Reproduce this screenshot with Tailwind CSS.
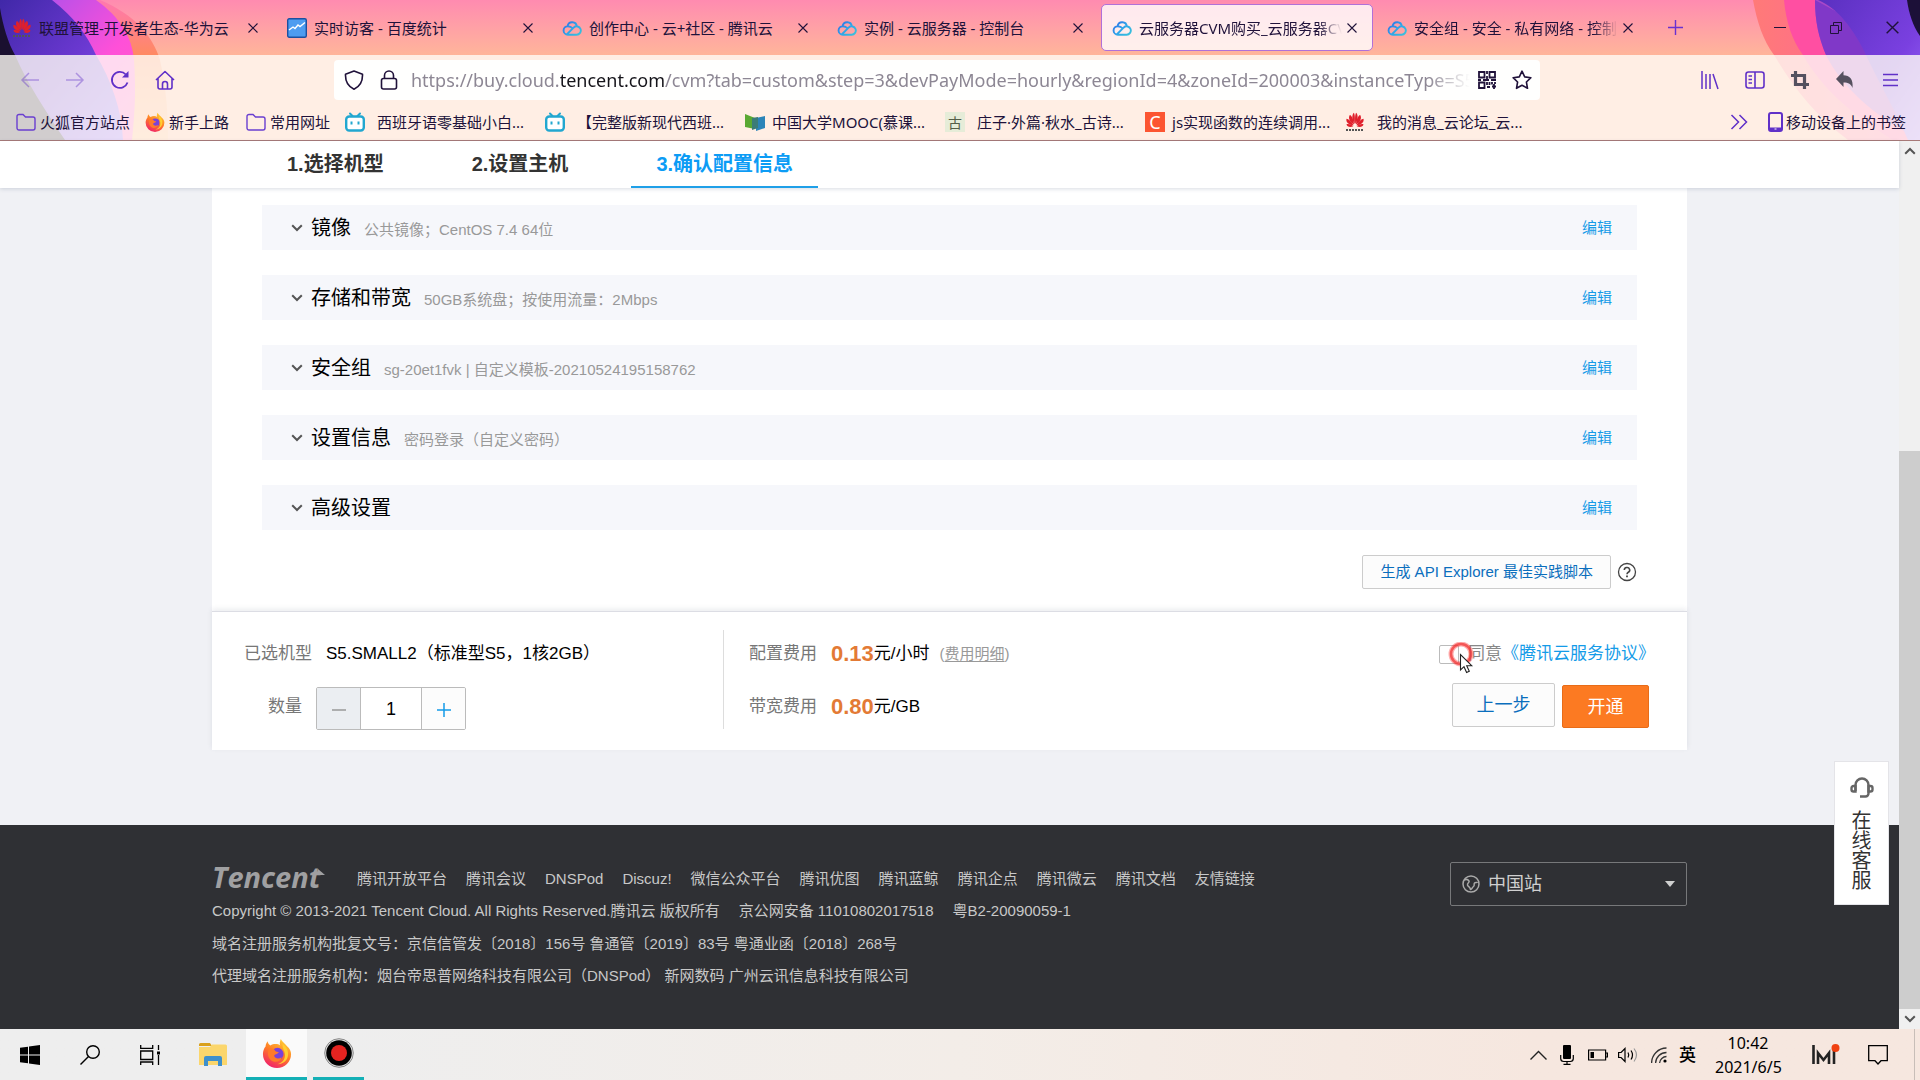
<!DOCTYPE html>
<html lang="zh-CN">
<head>
    <meta charset="UTF-8">
    <meta name="viewport" content="width=device-width, initial-scale=1.0">
    <title>云服务器CVM购买_云服务器CVM</title>
    <script src="https://cdn.jsdelivr.net/npm/@tailwindcss/browser@4"></script>
</head>
<body class="h-screen overflow-hidden flex flex-col bg-[#f0f1f5] text-[15px] leading-5 text-black font-['Liberation_Sans','Noto_Sans_CJK_SC',sans-serif]">

    <!-- shared icons -->
    <svg class="absolute size-0" aria-hidden="true">
        <defs>
            <linearGradient id="cloudFill" gradientUnits="userSpaceOnUse" x1="4" y1="4" x2="20" y2="21"><stop stop-color="#2f6fe8"/><stop offset=".55" stop-color="#2fa8e8"/><stop offset="1" stop-color="#38c0dc"/></linearGradient>
            <linearGradient id="foxFill" x1=".8" y1="0" x2=".3" y2="1"><stop stop-color="#ffd83a"/><stop offset=".5" stop-color="#ff7b25"/><stop offset="1" stop-color="#f0206c"/></linearGradient>
        </defs>
        <symbol id="close" viewBox="0 0 10 10"><path d="M.5.5l9 9M9.5.5l-9 9" fill="none" stroke="currentColor" stroke-width="1.1"/></symbol>
        <symbol id="chevron" viewBox="0 0 12 8"><path d="M1.2 1.2L6 6l4.800-4.800" fill="none" stroke="currentColor" stroke-width="2"/></symbol>
        <symbol id="cloud" viewBox="0 0 24 24"><path d="M13 12.500C11.300 10.800 9.300 9.800 7 9.800a5.100 5.100 0 0 0 0 10.200h10.500a5 5 0 1 0-3.300-8.700L6 19.500M6.700 9.800a5.600 5.600 0 0 1 11.100.4" fill="none" stroke="url(#cloudFill)" stroke-width="2.300" stroke-linejoin="round"/></symbol>
        <symbol id="folder" viewBox="0 0 20 18"><path d="M1 3.500A2 2 0 0 1 3 1.500h4L9.500 4H17a2 2 0 0 1 2 2v9a2 2 0 0 1-2 2H3a2 2 0 0 1-2-2z" fill="none" stroke="#6a3fd0" stroke-width="1.400"/></symbol>
        <symbol id="bili" viewBox="0 0 20 20"><path d="M5 1.500L7.500 4M15 1.500L12.500 4" stroke="#22a7d0" stroke-width="2" stroke-linecap="round"/><rect x="1.200" y="4.500" width="17.600" height="14" rx="3" fill="#fff" stroke="#22a7d0" stroke-width="2.400"/><path d="M6.500 9.500v3M13.500 9.500v3" stroke="#22a7d0" stroke-width="2"/></symbol>
        <symbol id="huawei" viewBox="0 0 20 20"><g fill="#e0202c"><path d="M9.700 12C7 8 6.500 3.500 8.800.8c1 1.200 1.400 5 .9 11.200zM10.300 12C13 8 13.500 3.500 11.200.8c-1 1.200-1.400 5-.9 11.200z"/><path d="M9 12.600C4.800 10 2.800 6 4.800 3c2 .6 3.800 4.500 4.200 9.600zM11 12.600C15.200 10 17.200 6 15.200 3c-2 .6-3.800 4.500-4.200 9.600z"/><path d="M8.500 13.400C4 13 .5 10.300 1.500 6.800c2 0 5.200 3 7 6.600zM11.500 13.400C16 13 19.500 10.300 18.500 6.800c-2 0-5.200 3-7 6.600z"/><path d="M8.300 14.300c-3 1.400-6.300.7-6.800-2 2-.7 4.700.2 6.800 2zM11.700 14.300c3 1.400 6.300.7 6.800-2-2-.7-4.700.2-6.800 2z"/></g><path d="M1 18h18" stroke="#555" stroke-width="2" stroke-dasharray="2 1"/></symbol>
        <symbol id="firefox" viewBox="0 0 32 32"><path d="M27 9c-2-3-5-4-7-8-1 3-1.500 5-.5 7C17 6 12 6 9 8 7 7 6 5 6.200 3.500 4.500 5 4 7 3.800 9 2 11 1 14 1 17a15 15 0 0 0 30 0c0-3-1.500-6-4-8z" fill="url(#foxFill)"/><path d="M22 6c4 3 7 8 5.500 14-1.500 5-6 8-11 8 6-2 8.500-6 8-11-.4-4-3-6-2.500-11z" fill="#ffcf30"/><circle cx="16.500" cy="17" r="6.500" fill="#7a42d8"/><path d="M7 12c3-1.500 6-.5 7 1.500 1 1.300 3 .8 4 2-2 2-4.500 1.500-5 3.800 1 3 5 3.500 8 1.200-1 4.500-7 6.500-11 3.500-3.500-2.500-4.500-8-3-12z" fill="#ff7a2a"/></symbol>
    </svg>

    <!-- browser chrome -->
    <header class="relative flex-none h-[141px] text-[#20123a] font-['Noto_Sans','Noto_Sans_CJK_SC',sans-serif] bg-linear-to-b from-[#ff8bb0] to-[#ffb59a] to-[55px] border-b border-[#a87a78]">
        <svg class="absolute left-0 top-0 w-[240px] h-[140px]" viewBox="0 0 240 140" aria-hidden="true">
            <defs>
                <linearGradient id="lv" x1="0" y1="0" x2="1" y2="1"><stop stop-color="#4028a8"/><stop offset=".5" stop-color="#6a38d0"/><stop offset="1" stop-color="#8a5cff"/></linearGradient>
                <linearGradient id="lm" x1="0" y1="0" x2="1" y2="1"><stop stop-color="#9a50f0"/><stop offset=".6" stop-color="#ff50d8"/><stop offset="1" stop-color="#ff60c0"/></linearGradient>
                <linearGradient id="lo" x1="0" y1="0" x2="0" y2="1"><stop stop-color="#ff78b0"/><stop offset=".4" stop-color="#ff8a60"/><stop offset="1" stop-color="#ffb080"/></linearGradient>
            </defs>
            <path d="M0 0h100c35 15 52 35 60 60 6 28 8 50 8 80H0z" fill="url(#lo)"/>
            <path d="M0 0h96c24 17 36 37 38 60 2 30 1 50-2 80H0z" fill="url(#lm)"/>
            <path d="M0 0h52c22 17 35 35 44 55 15 25 26 55 27 85H0z" fill="url(#lv)"/>
            <path d="M0 8c3 18 8 35 15 47 12 28 30 55 50 85H0z" fill="#1a1030"/>
        </svg>
        <svg class="absolute right-0 top-0 w-[220px] h-[140px]" viewBox="0 0 220 140" aria-hidden="true">
            <defs>
                <linearGradient id="rc" x1="0" y1="0" x2="1" y2="0"><stop stop-color="#ff7a78"/><stop offset="1" stop-color="#ff60a0"/></linearGradient>
                <linearGradient id="rv" x1="0" y1="0" x2="1" y2="1"><stop stop-color="#5a30c0"/><stop offset=".6" stop-color="#7a40e0"/><stop offset="1" stop-color="#a070ff"/></linearGradient>
            </defs>
            <path d="M53 0c4 22 10 40 21 55 18 30 40 60 74 85h72V0z" fill="url(#rc)"/>
            <path d="M84 0c2 22 8 40 19 55 20 35 50 60 90 85h27V0z" fill="#ff4fa2"/>
            <path d="M115 0c0 22 4 38 11 55 16 32 48 62 94 84V0z" fill="#a848c8"/>
            <path d="M115 0c0 22 4 38 11 55h44c-10-10-17-24-20-36z" fill="#8038c8"/>
            <path d="M118 0c20 8 36 30 48 55 14 30 32 60 42 85h12V0z" fill="url(#rv)"/>
            <path d="M207 0c2 14 6 26 13 36V0z" fill="#1c1038"/>
        </svg>

        <div class="relative flex h-[55px] items-center pl-px">
            <div class="flex min-w-0 max-w-[275px] flex-1 items-center pl-[11px] pr-[13px]">
                <svg class="size-5 flex-none"><use href="#huawei"/></svg>
                <a href="#" class="ml-[7px] flex-1 overflow-hidden whitespace-nowrap">联盟管理-开发者生态-华为云</a>
                <button class="flex size-5 flex-none items-center justify-center" aria-label="关闭标签页"><svg class="size-[10px]"><use href="#close"/></svg></button>
            </div>
            <div class="flex min-w-0 max-w-[275px] flex-1 items-center pl-[11px] pr-[13px]">
                <svg class="size-5 flex-none" viewBox="0 0 20 20"><rect x=".7" y=".7" width="18.600" height="18.600" rx="1.500" fill="#4e9cf0" stroke="#1c50a0" stroke-width="1.400"/><path d="M2 12l4-3 2 1.500 3-3.500 2 1.500 5-4" fill="none" stroke="#fff" stroke-width="1.400"/></svg>
                <a href="#" class="ml-[7px] flex-1 overflow-hidden whitespace-nowrap">实时访客 - 百度统计</a>
                <button class="flex size-5 flex-none items-center justify-center" aria-label="关闭标签页"><svg class="size-[10px]"><use href="#close"/></svg></button>
            </div>
            <div class="flex min-w-0 max-w-[275px] flex-1 items-center pl-[11px] pr-[13px]">
                <svg class="size-5 flex-none"><use href="#cloud"/></svg>
                <a href="#" class="ml-[7px] flex-1 overflow-hidden whitespace-nowrap">创作中心 - 云+社区 - 腾讯云</a>
                <button class="flex size-5 flex-none items-center justify-center" aria-label="关闭标签页"><svg class="size-[10px]"><use href="#close"/></svg></button>
            </div>
            <div class="flex min-w-0 max-w-[275px] flex-1 items-center pl-[11px] pr-[13px]">
                <svg class="size-5 flex-none"><use href="#cloud"/></svg>
                <a href="#" class="ml-[7px] flex-1 overflow-hidden whitespace-nowrap">实例 - 云服务器 - 控制台</a>
                <button class="flex size-5 flex-none items-center justify-center" aria-label="关闭标签页"><svg class="size-[10px]"><use href="#close"/></svg></button>
            </div>
            <div class="mr-[3px] flex h-[47px] min-w-0 max-w-[272px] flex-1 items-center rounded-[5px] border border-[#b070d8] bg-white/80 px-[10px]">
                <svg class="size-5 flex-none"><use href="#cloud"/></svg>
                <a href="#" class="ml-[7px] flex-1 overflow-hidden whitespace-nowrap [mask-image:linear-gradient(to_right,#000_88%,transparent)]">云服务器CVM购买_云服务器CVM</a>
                <button class="flex size-5 flex-none items-center justify-center" aria-label="关闭标签页"><svg class="size-[10px]"><use href="#close"/></svg></button>
            </div>
            <div class="flex min-w-0 max-w-[275px] flex-1 items-center pl-[11px] pr-[13px]">
                <svg class="size-5 flex-none"><use href="#cloud"/></svg>
                <a href="#" class="ml-[7px] flex-1 overflow-hidden whitespace-nowrap [mask-image:linear-gradient(to_right,#000_88%,transparent)]">安全组 - 安全 - 私有网络 - 控制台</a>
                <button class="flex size-5 flex-none items-center justify-center" aria-label="关闭标签页"><svg class="size-[10px]"><use href="#close"/></svg></button>
            </div>
            <button class="flex h-full w-12 flex-none items-center justify-center" aria-label="新建标签页"><svg class="size-[15px]" viewBox="0 0 15 15"><path d="M7.500 0v15M0 7.500h15" stroke="#6a30d0" stroke-width="1.400"/></svg></button>
            <div class="ml-auto flex h-full">
                <button class="flex w-14 items-center justify-center" aria-label="最小化"><svg class="size-3" viewBox="0 0 12 12"><path d="M0 5.500h12" stroke="currentColor"/></svg></button>
                <button class="flex w-14 items-center justify-center" aria-label="还原"><svg class="size-3" viewBox="0 0 12 12" fill="none" stroke="currentColor"><path d="M.5 3.500h8v8h-8zM3.500 3.500v-3h8v8h-3"/></svg></button>
                <button class="flex w-14 items-center justify-center" aria-label="关闭"><svg class="size-[13px]"><use href="#close"/></svg></button>
            </div>
        </div>

        <div class="relative h-[85px] bg-[#fffcf6]/80">
            <div class="flex h-[50px] items-center">
                <div class="flex w-[334px] flex-none items-center gap-[25px] pl-5 text-[#6030c8]">
                    <button class="opacity-40" aria-label="后退"><svg class="size-5" viewBox="0 0 20 20" fill="none" stroke="currentColor" stroke-width="1.500"><path d="M19 10H2M9 3l-7 7 7 7"/></svg></button>
                    <button class="opacity-40" aria-label="前进"><svg class="size-5" viewBox="0 0 20 20" fill="none" stroke="currentColor" stroke-width="1.500"><path d="M1 10h17M11 3l7 7-7 7"/></svg></button>
                    <button aria-label="刷新"><svg class="size-5" viewBox="0 0 20 20" fill="none" stroke="currentColor" stroke-width="1.800"><path d="M17.500 12.500A8 8 0 1 1 15.800 4.500"/><path d="M18.500 1v6.500H12z" fill="currentColor" stroke="none"/></svg></button>
                    <button aria-label="主页"><svg class="size-5" viewBox="0 0 20 20" fill="none" stroke="currentColor" stroke-width="1.600" stroke-linejoin="round"><path d="M1 10L10 1.500 19 10M3 8.500V17a2 2 0 0 0 2 2h10a2 2 0 0 0 2-2V8.500M7.500 19v-5a2.500 2.500 0 0 1 5 0v5"/></svg></button>
                </div>
                <div class="flex h-10 min-w-0 flex-1 items-center rounded bg-white/95 pl-[10px] pr-2">
                    <svg class="size-5 flex-none" viewBox="0 0 20 20" fill="none" stroke="#20123a" stroke-width="1.600"><path d="M10 1l8.500 3.200C18.800 11 16 16.500 10 19.200 4 16.500 1.200 11 1.500 4.200z" stroke-linejoin="round"/></svg>
                    <svg class="ml-[15px] size-5 flex-none" viewBox="0 0 20 20" fill="none" stroke="#20123a" stroke-width="1.600"><rect x="2.500" y="8.500" width="15" height="10.500" rx="2"/><path d="M5.500 8.500V5.500a4.500 4.500 0 0 1 9 0v3"/></svg>
                    <div class="ml-3 flex-1 overflow-hidden whitespace-nowrap text-lg leading-6 text-[#8d8794] [mask-image:linear-gradient(to_right,#000_96%,transparent)]">https://buy.cloud.<span class="text-[#15141a]">tencent.com</span>/cvm?tab=custom&amp;step=3&amp;devPayMode=hourly&amp;regionId=4&amp;zoneId=200003&amp;instanceType=S5</div>
                    <button class="ml-2 flex-none" aria-label="二维码"><svg class="size-[18px]" viewBox="0 0 18 18" fill="none" stroke="#20123a" stroke-width="1.800"><path d="M1 1h5.500v5.500H1zM11.500 1H17v5.500h-5.500zM1 11.500h5.500V17H1z"/><path d="M9 0v3M9 5v4M0 9h3M5 9h6M13 9h5M9 11v3M11.500 11v3M9 16h3M14 11v2.500M17 11v2M14 15.500h4M16 13v5"/></svg></button>
                    <button class="ml-4 flex-none" aria-label="收藏"><svg class="size-5" viewBox="0 0 20 20" fill="none" stroke="#20123a" stroke-width="1.600" stroke-linejoin="round"><path d="M10 1.200l2.700 5.700 6.200.8-4.500 4.300 1.100 6.300L10 15.200l-5.500 3.100L5.600 12 1.100 7.700l6.200-.8z"/></svg></button>
                </div>
                <div class="flex w-[380px] flex-none items-center justify-end gap-[25px] pr-5 text-[#6030c8]">
                    <button aria-label="书库"><svg class="size-5" viewBox="0 0 20 20" fill="none" stroke="currentColor" stroke-width="1.500"><path d="M2 1v18M6 4v15M10 4v15M13 4l5 15"/></svg></button>
                    <button aria-label="侧栏"><svg class="size-5" viewBox="0 0 20 20" fill="none" stroke="currentColor" stroke-width="1.600"><rect x="1" y="2" width="18" height="16" rx="2.500"/><path d="M10 2v16M3.500 6H7M3.500 9.500H7M3.500 13H7"/></svg></button>
                    <button aria-label="截图"><svg class="size-5" viewBox="0 0 20 20" fill="none" stroke="#55505f" stroke-width="3.200"><path d="M5.500 1v13.500H19M1 5.500h13.500V19"/></svg></button>
                    <button aria-label="撤销"><svg class="size-5" viewBox="0 0 20 20"><path d="M8.500 1v4.200c6 .3 10 3.500 9 12.800-1.500-4-4-5.500-9-5.500V17L1 9z" fill="#55505f"/></svg></button>
                    <button aria-label="菜单"><svg class="size-5" viewBox="0 0 20 20"><path d="M3 4.500h15M3 10h15M3 15.500h15" stroke="currentColor" stroke-width="1.500"/></svg></button>
                </div>
            </div>
            <nav class="flex h-[35px] items-center whitespace-nowrap pl-4 pr-[14px] pb-px">
                <a href="#" class="flex items-center gap-1 mr-[15px]"><svg class="h-[18px] w-5"><use href="#folder"/></svg>火狐官方站点</a>
                <a href="#" class="flex items-center gap-1 mr-[17px]"><svg class="size-5"><use href="#firefox"/></svg>新手上路</a>
                <a href="#" class="flex items-center gap-1 mr-[15px]"><svg class="h-[18px] w-5"><use href="#folder"/></svg>常用网址</a>
                <a href="#" class="flex w-[200px] items-center gap-3"><svg class="size-5 flex-none"><use href="#bili"/></svg>西班牙语零基础小白...</a>
                <a href="#" class="flex w-[200px] items-center gap-3"><svg class="size-5 flex-none"><use href="#bili"/></svg>【完整版新现代西班...</a>
                <a href="#" class="flex w-[200px] items-center gap-[7px]"><svg class="size-5 flex-none" viewBox="0 0 20 20"><path d="M0 2l10 4v11L0 15z" fill="#5aa832"/><path d="M20 4l-9 2v13l9-3z" fill="#2b84b8"/><path d="M7 6l6-1v11l-6 2z" fill="#3b7c78"/></svg>中国大学MOOC(慕课...</a>
                <a href="#" class="flex w-[200px] items-center gap-3"><span class="flex size-5 flex-none items-center justify-center bg-[#e6ecd8] font-['Noto_Sans_CJK_SC',sans-serif] text-sm text-[#555f48]">古</span>庄子·外篇·秋水_古诗...</a>
                <a href="#" class="flex w-[200px] items-center gap-[7px]"><span class="flex size-5 flex-none items-center justify-center bg-[#fc5531] text-lg text-white">C</span>js实现函数的连续调用...</a>
                <a href="#" class="flex items-center gap-3"><svg class="size-5 flex-none"><use href="#huawei"/></svg>我的消息_云论坛_云...</a>
                <button class="ml-auto mr-5" aria-label="更多书签"><svg class="h-4 w-[18px]" viewBox="0 0 18 16" fill="none" stroke="#6030c8" stroke-width="1.500"><path d="M1.500 1l7 7-7 7M9.500 1l7 7-7 7"/></svg></button>
                <a href="#" class="flex items-center gap-[3px]"><svg class="h-5 w-[15px]" viewBox="0 0 15 20"><rect x="1" y="1" width="13" height="18" rx="2" fill="none" stroke="#6030c8" stroke-width="2"/><path d="M2 15.500h11V19H2z" fill="#6030c8"/><path d="M6.500 17h2" stroke="#fff"/></svg>移动设备上的书签</a>
            </nav>
        </div>
    </header>

    <div class="flex min-h-0 flex-1">
        <main class="relative flex min-w-0 flex-1 flex-col">
            <nav class="relative z-10 h-[47px] flex-none bg-white shadow-[0_1px_4px_rgba(60,80,110,0.2)]">
                <div class="mx-auto flex h-full max-w-[1475px] gap-[38px] pl-[50px] text-xl leading-[46px] font-bold text-[#333]">
                    <a href="#" class="px-[25px]">1.选择机型</a>
                    <a href="#" class="px-[25px]">2.设置主机</a>
                    <a href="#" class="border-b-2 border-[#1fa0e8] px-[25px] text-[#0c9cf5]">3.确认配置信息</a>
                </div>
            </nav>

            <div class="mx-auto w-full max-w-[1475px]">
                <section class="flex flex-col gap-[25px] bg-white px-[50px] pt-[17px] pb-[22px]">
                    <div class="flex h-[45px] items-center bg-[#f6f7fb] pl-[29px] pr-[25px]">
                        <svg class="h-2 w-3 text-[#555]"><use href="#chevron"/></svg>
                        <h2 class="ml-2 text-xl">镜像</h2>
                        <p class="ml-[13px] mt-1 text-[#999]">公共镜像；CentOS 7.4 64位</p>
                        <a href="#" class="ml-auto text-[#149be8]">编辑</a>
                    </div>
                    <div class="flex h-[45px] items-center bg-[#f6f7fb] pl-[29px] pr-[25px]">
                        <svg class="h-2 w-3 text-[#555]"><use href="#chevron"/></svg>
                        <h2 class="ml-2 text-xl">存储和带宽</h2>
                        <p class="ml-[13px] mt-1 text-[#999]">50GB系统盘；按使用流量：2Mbps</p>
                        <a href="#" class="ml-auto text-[#149be8]">编辑</a>
                    </div>
                    <div class="flex h-[45px] items-center bg-[#f6f7fb] pl-[29px] pr-[25px]">
                        <svg class="h-2 w-3 text-[#555]"><use href="#chevron"/></svg>
                        <h2 class="ml-2 text-xl">安全组</h2>
                        <p class="ml-[13px] mt-1 text-[#999]">sg-20et1fvk | 自定义模板-20210524195158762</p>
                        <a href="#" class="ml-auto text-[#149be8]">编辑</a>
                    </div>
                    <div class="flex h-[45px] items-center bg-[#f6f7fb] pl-[29px] pr-[25px]">
                        <svg class="h-2 w-3 text-[#555]"><use href="#chevron"/></svg>
                        <h2 class="ml-2 text-xl">设置信息</h2>
                        <p class="ml-[13px] mt-1 text-[#999]">密码登录（自定义密码）</p>
                        <a href="#" class="ml-auto text-[#149be8]">编辑</a>
                    </div>
                    <div class="flex h-[45px] items-center bg-[#f6f7fb] pl-[29px] pr-[25px]">
                        <svg class="h-2 w-3 text-[#555]"><use href="#chevron"/></svg>
                        <h2 class="ml-2 text-xl">高级设置</h2>
                        <a href="#" class="ml-auto text-[#149be8]">编辑</a>
                    </div>
                    <div class="flex items-center justify-end gap-[6px]">
                        <button class="h-[34px] rounded-xs border border-[#ccc] bg-[#fcfcfc] px-[17px] text-[#0a6ebd]">生成 API Explorer 最佳实践脚本</button>
                        <svg class="size-5" viewBox="0 0 20 20" fill="none" stroke="#444" stroke-width="1.300"><circle cx="10" cy="10" r="8.500"/><path d="M7.300 8a2.700 2.500 0 1 1 4 2.200c-1 .6-1.300 1-1.300 2" stroke-width="1.600"/><path d="M10 13.500v1.700" stroke-width="1.800"/></svg>
                    </div>
                </section>

                <section class="relative flex h-[139px] items-start border-t border-[#dcdde4] bg-white pt-[18px] pr-[38px] pl-8 text-[17px] leading-6 shadow-[0_-2px_5px_rgba(60,70,100,0.1)]">
                    <div class="w-[480px] border-r border-[#ddd] h-[99px] pt-3">
                        <div class="flex gap-[14px]"><span class="text-[#777]">已选机型</span><span>S5.SMALL2（标准型S5，1核2GB）</span></div>
                        <div class="mt-[21px] flex pl-6">
                            <label for="count" class="pt-2 text-[#777]">数量</label>
                            <div class="ml-[14px] flex h-[43px] overflow-hidden rounded-xs border border-[#bbb]">
                                <button class="flex w-[43px] items-center justify-center bg-[#ebeef2]" aria-label="减少"><svg class="size-4" viewBox="0 0 16 16"><path d="M1 9h14" stroke="#999" stroke-width="1.500"/></svg></button>
                                <input id="count" type="text" value="1" class="w-[62px] border-x border-[#bbb] bg-white text-center text-lg">
                                <button class="flex w-[43px] items-center justify-center bg-[#fcfcfc]" aria-label="增加"><svg class="size-4" viewBox="0 0 16 16"><path d="M1 9h14M8 2v14" stroke="#149be8" stroke-width="1.500"/></svg></button>
                            </div>
                        </div>
                    </div>
                    <div class="pt-3 pl-[25px]">
                        <div class="flex items-center"><span class="text-[#777]">配置费用</span><b class="ml-[14px] text-[22px] text-[#e37a35]">0.13</b><span>元/小时</span><span class="ml-[10px] text-[15px] text-[#999]">(<a href="#" class="underline underline-offset-2">费用明细</a>)</span></div>
                        <div class="mt-[29px] flex items-center"><span class="text-[#777]">带宽费用</span><b class="ml-[14px] text-[22px] text-[#e37a35]">0.80</b><span>元/GB</span></div>
                    </div>
                    <div class="ml-auto flex flex-col items-end pt-3">
                        <div class="-mr-[6px] flex items-center">
                            <input id="agree" type="checkbox" class="mr-[9px] h-[19px] w-5 appearance-none rounded-xs border border-[#bbb] bg-white">
                            <label for="agree" class="text-[#888]">同意</label><a href="#" class="text-[#149be8]">《腾讯云服务协议》</a>
                        </div>
                        <div class="mt-[17px] flex gap-[7px]">
                            <button class="h-11 w-[103px] rounded-xs border border-[#ccc] bg-[#fcfcfc] text-lg text-[#0a6ebd]">上一步</button>
                            <button class="mt-[2px] h-[43px] w-[87px] rounded-xs border border-[#e86c18] bg-[#fc7a22] text-lg text-white">开通</button>
                        </div>
                    </div>
                    <!-- pointer with click ring -->
                    <svg class="absolute top-[30px] right-[206px] h-10 w-10" viewBox="0 0 40 40" aria-hidden="true"><circle cx="20" cy="12" r="10" fill="none" stroke="#ff2020" stroke-opacity=".35" stroke-width="5"/><circle cx="20" cy="12" r="10" fill="none" stroke="#f03030" stroke-opacity=".7" stroke-width="2.500"/><path d="M19.500 12.500v15.500l3.500-3.300 2.600 5.800 2.700-1.200-2.600-5.600h5z" fill="#fff" stroke="#222" stroke-width="1.100"/></svg>
                </section>
            </div>

            <footer class="mt-[75px] flex-1 bg-[#2f3034] text-[#c8c8c8]">
                <div class="mx-auto flex max-w-[1475px] justify-between pt-[37px]">
                    <div>
                        <div class="flex h-[33px] items-center gap-[19px] whitespace-nowrap">
                            <div class="relative mr-[13px] -mt-1 w-[113px] font-['Open_Sans',sans-serif] text-[29px] leading-8 font-bold italic text-[#a0a0a2]">Tencen<span>t</span><svg class="absolute top-2 right-0 h-[8px] w-[10px]" viewBox="0 0 10 8"><path d="M3 0l7 6H1z" fill="#a0a0a2"/></svg></div>
                            <a href="#">腾讯开放平台</a><a href="#">腾讯会议</a><a href="#">DNSPod</a><a href="#">Discuz!</a><a href="#">微信公众平台</a><a href="#">腾讯优图</a><a href="#">腾讯蓝鲸</a><a href="#">腾讯企点</a><a href="#">腾讯微云</a><a href="#">腾讯文档</a><a href="#">友情链接</a>
                        </div>
                        <p class="flex gap-[19px] leading-8"><span>Copyright © 2013-2021 Tencent Cloud. All Rights Reserved.腾讯云 版权所有</span><a href="#">京公网安备 11010802017518</a><a href="#">粤B2-20090059-1</a></p>
                        <p class="leading-[33px]">域名注册服务机构批复文号：京信信管发〔2018〕156号 鲁通管〔2019〕83号 粤通业函〔2018〕268号</p>
                        <p class="leading-8">代理域名注册服务机构：烟台帝思普网络科技有限公司（DNSPod） 新网数码 广州云讯信息科技有限公司</p>
                    </div>
                    <div class="relative h-11 w-[237px]">
                        <svg class="absolute top-[13px] left-3 size-[18px]" viewBox="0 0 18 18" fill="none" stroke="#aaa" stroke-width="1.500"><circle cx="9" cy="9" r="8"/><path d="M2 5c2-1 4-.5 5 1s-2 2-1.500 4 2.500 1.500 3 4.500c1.500 0 1.500-2 3-3s0-2.500 1-3.500 2.500 0 3-1"/></svg>
                        <select aria-label="站点" class="h-full w-full appearance-none rounded-xs border border-[#77787a] bg-transparent pl-[37px] text-lg text-[#d0d0d0]"><option>中国站</option></select>
                        <svg class="absolute top-[19px] right-3 h-[6px] w-[10px]" viewBox="0 0 10 6"><path d="M0 0h10L5 6z" fill="#d0d0d0"/></svg>
                    </div>
                </div>
            </footer>

            <button class="absolute top-[620px] right-[10px] z-10 flex h-36 w-[55px] flex-col items-center border border-[#e4e4e8] bg-white pt-[15px] text-xl leading-5 text-[#333]">
                <svg class="mb-3 h-[22px] w-6" viewBox="0 0 24 22" fill="none" stroke="#666" stroke-width="2.400"><path d="M5.500 14V8a6.500 6.500 0 0 1 13 0v8.500a3 3 0 0 1-3 3H10"/><path d="M5.500 9H3.500a2 2 0 0 0-2 2v1.500a2 2 0 0 0 2 2h2zM18.500 9h2a2 2 0 0 1 2 2v1.500a2 2 0 0 1-2 2h-2z"/></svg>
                <span class="w-5 whitespace-normal">在线客服</span>
            </button>
        </main>

        <!-- scrollbar -->
        <div class="flex w-[21px] flex-none flex-col items-center bg-[#f0f0f0] text-[#555]">
            <svg class="mt-[6px] h-2 w-3 rotate-180"><use href="#chevron"/></svg>
            <div class="mt-[296px] w-full flex-1 bg-[#cdcdcd]"></div>
            <svg class="my-[6px] h-2 w-3"><use href="#chevron"/></svg>
        </div>
    </div>

    <!-- taskbar -->
    <footer class="flex h-[51px] flex-none items-center bg-linear-to-r from-[#eeeeee] from-18% via-[#f3ede8] via-50% to-[#f6e7df] to-80%">
        <button class="flex h-full w-[60px] items-center justify-center" aria-label="开始"><svg class="size-5" viewBox="0 0 20 20"><path d="M0 2.800l8-1.100v7.800H0zM9 1.500L20 0v9.500H9zM0 10.500h8v7.800l-8-1.100zM9 10.500h11V20L9 18.500z"/></svg></button>
        <button class="flex h-full w-[60px] items-center justify-center" aria-label="搜索"><svg class="size-5" viewBox="0 0 20 20" fill="none" stroke="#000" stroke-width="1.400"><circle cx="13" cy="7" r="6.300"/><path d="M8.500 11.500L.5 19.500"/></svg></button>
        <button class="flex h-full w-[60px] items-center justify-center" aria-label="任务视图"><svg class="size-5" viewBox="0 0 20 20" fill="none" stroke="#000" stroke-width="1.300"><path d="M.7 0v3.300h12V0M.7 6h12v8.500H.7zM.7 20v-3h12v3M18.500 0v5M18.500 10v10"/><path d="M17 6.500h3v3h-3z" fill="#000" stroke="none"/></svg></button>
        <button class="flex h-full w-[66px] items-center justify-center" aria-label="文件资源管理器"><svg class="h-6 w-7" viewBox="0 0 28 24"><path d="M0 1.500A1.500 1.500 0 0 1 1.500 0H11l2 3H0z" fill="#d9a01c"/><path d="M0 4h11l2-2.500h13.500A1.500 1.500 0 0 1 28 3v19H0z" fill="#fbd66c"/><path d="M5 23V15a2 2 0 0 1 2-2h14a2 2 0 0 1 2 2v8h-4v-5H9v5z" fill="#3f90cc"/></svg></button>
        <button class="flex h-full w-[61px] items-center justify-center border-b-3 border-[#14b0b6] bg-[#fafafa]" aria-label="Firefox"><svg class="size-[30px]"><use href="#firefox"/></svg></button>
        <button class="ml-[6px] flex h-full w-[51px] items-center justify-center border-b-3 border-[#14b0b6]" aria-label="录屏"><svg class="size-[30px]" viewBox="0 0 30 30"><circle cx="15" cy="15" r="14.300" fill="#ddd" stroke="#888"/><circle cx="15" cy="15" r="12.800" fill="#000"/><circle cx="15" cy="15" r="8" fill="#e42320"/></svg></button>
        <div class="ml-auto flex h-full items-center font-['Noto_Sans','Noto_Sans_CJK_SC',sans-serif]">
            <button aria-label="显示隐藏的图标"><svg class="h-[10px] w-[17px]" viewBox="0 0 17 10" fill="none" stroke="#222" stroke-width="1.400"><path d="M.5 9.500l8-8 8 8"/></svg></button>
            <svg class="ml-[13px] h-5 w-[14px]" viewBox="0 0 14 20"><rect x="3" width="8" height="14" rx="1"/><path d="M.7 10v3.500a3 3 0 0 0 3 3h6.600a3 3 0 0 0 3-3V10M7 16.500v3M3.500 19.400h7" fill="none" stroke="#000" stroke-width="1.200"/></svg>
            <svg class="ml-[14px] h-3 w-5" viewBox="0 0 20 12" fill="none" stroke="#000" stroke-width="1.200"><path d="M.6 1h17v10H.6zM17.600 4h1.800v4h-1.800"/><path d="M2.500 3h3.500v6H2.500z" fill="#000" stroke="none"/></svg>
            <svg class="ml-[10px] h-4 w-5" viewBox="0 0 20 16" fill="none" stroke="#000" stroke-width="1.200"><path d="M.6 5.500h2.500L7 1.500v13l-3.900-4H.6zM10 5.500q1.500 2.500 0 5M13 3.500q3 4.500 0 9"/><path d="M16 1.500q5 6.500 0 13" stroke="#999"/></svg>
            <svg class="ml-[13px] h-4 w-4" viewBox="0 0 16 16" fill="none" stroke="#333" stroke-width="1.300"><path d="M.6 16A15 15 0 0 1 15.500 1M4.600 16A11 11 0 0 1 15.500 5.500M8.600 16a7 7 0 0 1 6.900-6.500"/><circle cx="14" cy="14" r="1.600" fill="#000" stroke="none"/></svg>
            <span class="ml-3 text-[17px] font-medium">英</span>
            <time class="ml-[19px] w-[66px] text-center text-base leading-6">10:42<br>2021/6/5</time>
            <svg class="ml-[30px] h-7 w-[29px]" viewBox="0 0 29 28"><path d="M2.500 4v19M7 23V12l5.500 7 5.500-7v11M23 8v15" fill="none" stroke="#222" stroke-width="2.600"/><circle cx="24.500" cy="7" r="4" fill="#f04010"/></svg>
            <button class="ml-7" aria-label="通知"><svg class="size-5" viewBox="0 0 20 20" fill="none" stroke="#000" stroke-width="1.300"><path d="M.7.700h18.600v15H13l-3 3.300-3-3.300H.7z"/></svg></button>
            <div class="ml-[26px] h-full w-[6px] border-l border-[#c8beb8]"></div>
        </div>
    </footer>
</body>
</html>
